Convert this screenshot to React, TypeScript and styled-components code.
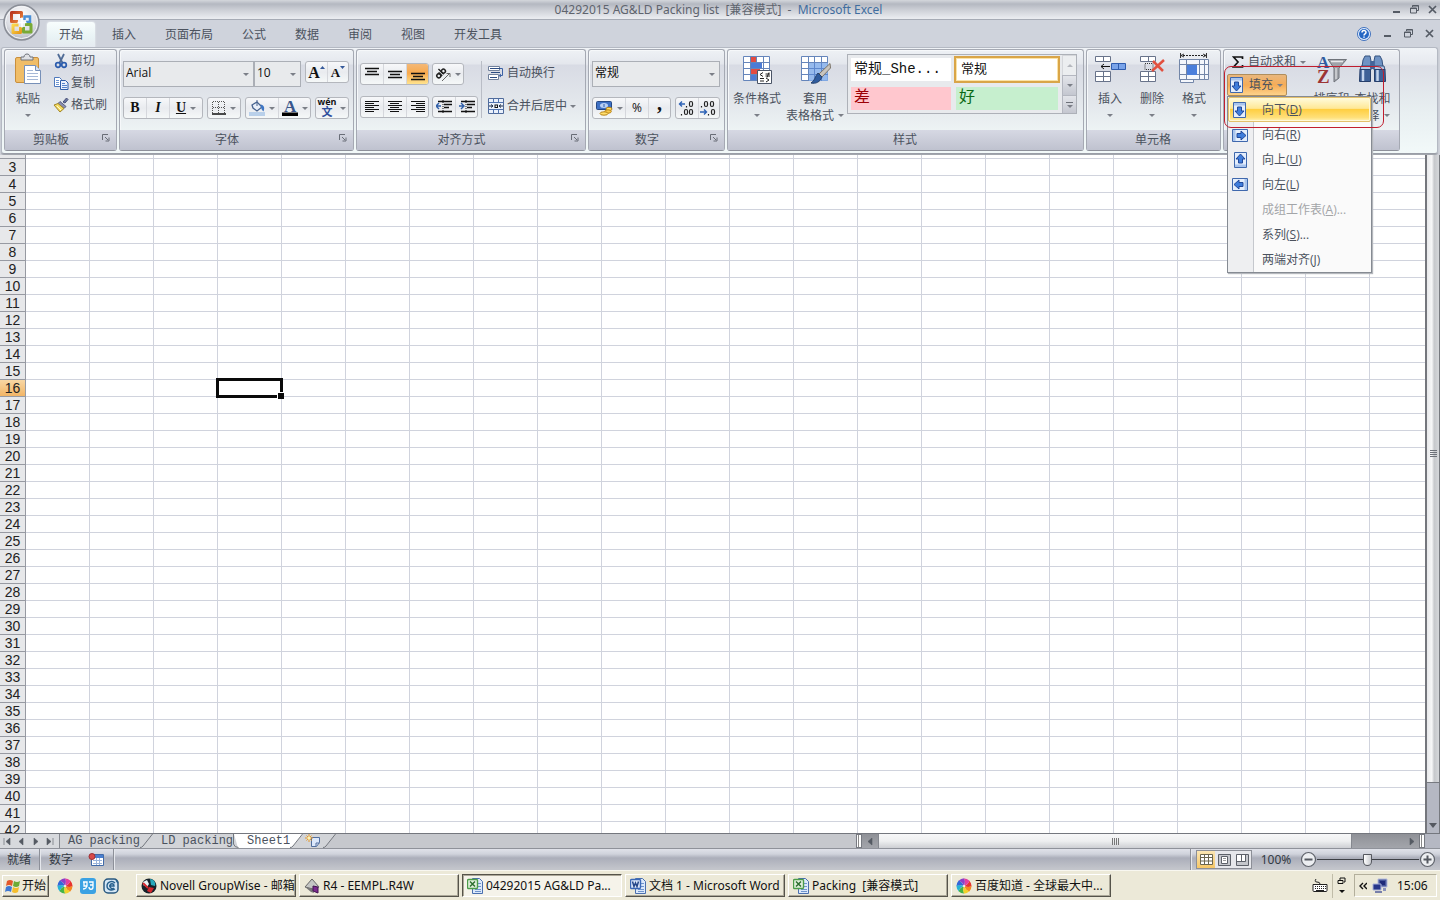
import React from 'react';
import styled, { createGlobalStyle, css } from 'styled-components';

const UI = '"Open Sans", "Noto Sans CJK SC", sans-serif';
const TASK = '"Noto Sans", "Noto Sans CJK SC", sans-serif';
const MONO = '"Liberation Mono", "Noto Sans CJK SC", monospace';
const INK = '#4b525e';

const GlobalStyle = createGlobalStyle`
  * { box-sizing: border-box; }
  body { margin: 0; background: #cfd2da; }
  button, select, input { font: inherit; color: inherit; margin: 0; }
  button { border: 0; padding: 0; background: none; }
  svg { display: block; flex: none; }
`;

const Page = styled.div`
  display: flex;
  flex-direction: column;
  height: 100vh;
  overflow: hidden;
  font: 12px/16px ${UI};
  color: ${INK};
  white-space: nowrap;
`;

/* ---------- title and tabs ---------- */
const TitleBar = styled.header`
  display: grid;
  grid-template-columns: 1fr auto 1fr;
  height: 20px;
  padding-right: 3px;
  align-items: center;
  border-bottom: 1px solid #a6abb5;
  background: linear-gradient(#d4d7dc 0, #b4b8c1 4px, #c9ccd3 9px, #e9ebef 18px);
`;
const Title = styled.h1`
  grid-column: 2;
  margin: 0;
  font: 12px/19px ${TASK};
  white-space: pre;
  color: #5e646e;
  b { font-weight: 400; color: #3f6d9f; }
`;
const WindowButtons = styled.div<{ $gap: number }>`
  display: flex;
  align-self: center;
  align-items: center;
  gap: ${p => p.$gap}px;
  margin-left: auto;
`;
const TabRow = styled.nav`
  display: flex;
  align-items: flex-end;
  gap: 5px;
  height: 27px;
  padding: 0 6px 0 47px;
  background: #cfd3dc;
`;
const Tab = styled.button<{ $on?: boolean }>`
  height: 25px;
  padding: 0 12px;
  line-height: 24px;
  border-radius: 3px 3px 0 0;
  ${p => p.$on && css`background: linear-gradient(#f8fdfd, #e9f3f5 60%, #e6ebf1); box-shadow: 0 0 2px #f7fbfc;`}
`;
const OfficeButton = styled.button`
  position: absolute;
  left: 3px;
  top: 4px;
`;

/* ---------- ribbon ---------- */
const Ribbon = styled.section`
  display: flex;
  gap: 2px;
  margin: 0 2px 1px 1px;
  padding: 1px 2px 2px;
  border: 1px solid #b4b9c3;
  border-bottom-color: #9a9ea7;
  border-radius: 3px;
  background: linear-gradient(#f0f3f7 0, #e6e9ef 16px, #dcdfe7 18px, #e8eff1 60%, #f2f9f9);
  box-shadow: 0 1px 1px #9da1a8;
`;
const GroupBox = styled.section<{ $w: number }>`
  display: flex;
  flex-direction: column;
  width: ${p => p.$w}px;
  height: 102px;
  border: 1px solid #a5a9b3;
  border-bottom-color: #8d909a;
  border-radius: 3px;
  background: linear-gradient(#eef1f5 0, #e4e7ed 14px, #d8dbe4 15px, #e2e6eb 50px, #edf3f4 80px);
  box-shadow: inset 1px 1px 0 #f6f8fa;
`;
const GroupBody = styled.div`
  display: flex;
  height: 80px;
`;
const GroupTitle = styled.h2`
  display: flex;
  align-items: center;
  height: 20px;
  margin: 0;
  padding-right: 1px;
  font: inherit;
  text-align: center;
  background: linear-gradient(#d6d8e3, #bfc2cf);
  span { flex: 1; }
  svg { margin: 0 5px 4px; }
`;
const Big = styled.button<{ $w: number }>`
  display: flex;
  flex-direction: column;
  align-items: center;
  width: ${p => p.$w}px;
  padding-top: 3px;
  svg { margin-bottom: 5px; }
`;
const BigLine = styled.span`
  display: flex;
  align-items: center;
  justify-content: center;
  gap: 4px;
  height: 17px;
  line-height: 17px;
`;
const Arrow = styled.i<{ $up?: boolean }>`
  width: 0;
  height: 0;
  border: 3px solid transparent;
  border-bottom-width: 0;
  border-top-color: #7b7f87;
  ${p => p.$up && css`transform: rotate(180deg); border-top-color: #b5b8be;`}
`;
const Stack = styled.div<{ $pad?: number; $gap?: number; $top?: number }>`
  display: flex;
  flex-direction: column;
  gap: ${p => p.$gap || 0}px;
  padding: ${p => p.$top || 0}px 0 0 ${p => p.$pad || 0}px;
`;
const Row = styled.div<{ $h: number; $gap: number; $top?: boolean }>`
  display: flex;
  align-items: ${p => (p.$top ? 'flex-start' : 'center')};
  gap: ${p => p.$gap}px;
  height: ${p => p.$h}px;
`;
const Command = styled.button<{ $gap: number }>`
  display: flex;
  align-items: center;
  gap: ${p => p.$gap}px;
  height: 22px;
  line-height: 18px;
`;
const Combo = styled.label<{ $w: number }>`
  position: relative;
  display: flex;
  width: ${p => p.$w}px;
  height: 26px;
  select {
    width: 100%;
    padding: 0 2px 2px;
    appearance: none;
    border: 1px solid #abafb6;
    border-radius: 0;
    background: #e8eaec;
    color: #111;
  }
  & + & select { border-left: 0; }
  ${Arrow} { position: absolute; right: 5px; top: 12px; pointer-events: none; }
`;
const Cluster = styled.div`
  display: flex;
  height: 22px;
  border: 1px solid #b4b7bd;
  border-radius: 3px;
  overflow: hidden;
  background: linear-gradient(#f7f8fa, #e9ebef 50%, #f5f8f8);
`;
const Tool = styled.button<{ $w: number; $on?: boolean }>`
  display: flex;
  align-items: center;
  justify-content: center;
  gap: 4px;
  width: ${p => p.$w}px;
  color: #111;
  & + & { border-left: 1px solid #d5d7dc; }
  ${p => p.$on && css`background: linear-gradient(#f3b877, #f8a94d 45%, #ffe38d);`}
`;
const GrowTool = styled(Tool)`
  gap: 0;
  padding-top: 2px;
`;
const Glyph = styled.span<{ $size?: number; $italic?: boolean; $line?: boolean; $raised?: boolean }>`
  font: ${p => (p.$italic ? 'italic ' : '')}bold ${p => p.$size || 14}px/18px "Liberation Serif", serif;
  text-decoration: ${p => (p.$line ? 'underline' : 'none')};
  padding-bottom: ${p => (p.$raised ? 10 : 0)}px;
`;
const Pinyin = styled.span`
  display: flex;
  flex-direction: column;
  align-items: center;
  font: bold 9px/8px ${UI};
  span + span { font-size: 11px; line-height: 12px; color: #2f4f9c; }
`;
const Divider = styled.div`
  width: 1px;
  height: 57px;
  margin: 11px 6px 0 3px;
  background: #b9bdc6;
`;

/* ---------- style gallery ---------- */
const Gallery = styled.div`
  display: flex;
  width: 230px;
  height: 60px;
  margin: 4px 0 0 3px;
  border: 1px solid #adb1b8;
  background: #e8eaed;
`;
const Swatches = styled.div`
  display: grid;
  flex: 1;
  grid-template: 27px 27px / 102px 106px;
  gap: 2px;
  padding: 1px 2px;
`;
const Swatch = styled.button<{ $bg: string; $ink: string; $size: number; $on?: boolean }>`
  padding: 0 3px 2px;
  text-align: left;
  background: ${p => p.$bg};
  color: ${p => p.$ink};
  font: ${p => p.$size}px/18px ${MONO};
  margin: 2px 1px;
  &:nth-child(even) { margin: 2px; }
  ${p => p.$on && css`
    &&& { margin: 0; }
    border: 2px solid #d9a548;
    box-shadow: inset 0 0 0 1px #fbe3a6;
    padding: 0 5px;
  `}
`;
const GalleryScroll = styled.div`
  display: grid;
  grid-template-rows: 20px 20px 18px;
  width: 14px;
  button {
    display: flex;
    flex-direction: column;
    align-items: center;
    justify-content: center;
    gap: 2px;
    border: 1px solid #b4b7c0;
    border-width: 1px 0 0 1px;
    background: linear-gradient(#e3e5ea, #c4c7d0);
  }
  button:first-child { background: #eceef0; border-color: #d5d7db; }
`;
const Bar = styled.i`
  width: 7px;
  height: 1px;
  background: #6d7179;
`;

/* ---------- editing group and fill menu ---------- */
const EditColumn = styled.div`
  width: 87px;
  padding-left: 3px;
`;
const SumCommand = styled(Command)`
  height: 24px;
  padding-left: 5px;
`;
const FillSlot = styled.div`
  position: relative;
  width: 60px;
  height: 22px;
`;
const FillButton = styled.button`
  display: flex;
  align-items: center;
  justify-content: space-between;
  width: 60px;
  height: 22px;
  padding: 0 3px 0 1px;
  border: 1px solid #b08e5c;
  border-radius: 2px;
  background: linear-gradient(#e9b77e, #f6ac57 50%, #fdd28a);
  line-height: 18px;
`;
const Menu = styled.div`
  position: absolute;
  z-index: 3;
  left: 0;
  top: 22px;
  width: 145px;
  border: 1px solid #868b93;
  background: linear-gradient(90deg, #eeeff1 25px, #c5c8cd 25px, #c5c8cd 26px, #fafafa 26px);
  box-shadow: 1px 1px 1px #b4b7bc;
`;
const MenuItem = styled.button<{ $on?: boolean }>`
  display: grid;
  grid-template-columns: 22px 1fr;
  column-gap: 8px;
  align-items: center;
  width: 100%;
  height: 25px;
  padding-left: 4px;
  text-align: left;
  &:disabled { color: #a3a5a8; }
  span { grid-column: 2; }
  svg { grid-row: 1; }
  ${p => p.$on && css`
    border: 1px solid #e3c06c;
    padding-left: 3px;
    border-radius: 2px;
    background: linear-gradient(#fffbdc, #ffe896 45%, #ffcf42 50%, #ffe07a 85%, #fff3b8);
    box-shadow: inset 0 0 0 1px #fff8d6;
  `}
`;
const Marker = styled.div`
  position: absolute;
  z-index: 4;
  left: -3px;
  top: -8px;
  width: 160px;
  height: 62px;
  border: 1px solid #c01e2e;
  border-radius: 7px;
  pointer-events: none;
`;

/* ---------- worksheet ---------- */
const Work = styled.main`
  display: flex;
  flex: 1;
  min-height: 0;
`;
const SheetView = styled.div`
  flex: 1;
  min-width: 0;
  overflow: hidden;
  background: #fff;
`;
const Sheet = styled.table`
  width: 100%;
  table-layout: fixed;
  border-collapse: separate;
  border-spacing: 0;
  td, th { padding: 0; height: 17px; }
  td { position: relative; border: solid #d0d3dd; border-width: 0 1px 1px 0; }
  td:last-child { border-right: 0; }
  tr:first-child > * { height: 4px; }
  col { width: 64px; }
  col:first-child { width: 26px; }
  col:last-child { width: auto; }
`;
const RowHead = styled.th<{ $on?: boolean }>`
  border: solid #979aa2;
  border-width: 0 1px 1px 0;
  background: ${p => (p.$on ? 'linear-gradient(#f8d7a4, #f2b566)' : '#e7e8ea')};
  font: 14px/16px "Liberation Sans", sans-serif;
  color: #222;
`;
const Selection = styled.div`
  position: absolute;
  z-index: 1;
  inset: -2px;
  border: 3px solid #0a0a0a;
  &::after {
    content: '';
    position: absolute;
    right: -4px;
    bottom: -4px;
    width: 6px;
    height: 6px;
    border: solid #fff;
    border-width: 1px 0 0 1px;
    background: #0a0a0a;
  }
`;
const VScroll = styled.div`
  display: flex;
  flex-direction: column;
  width: 15px;
  border-left: 2px solid #74767c;
  border-right: 1px solid #777a80;
  background: #b5b8c3;
`;
const VThumb = styled.div`
  display: flex;
  flex-direction: column;
  flex: 1;
  align-items: center;
  justify-content: center;
  gap: 1px;
  margin-bottom: 36px;
  padding-bottom: 30px;
  border-bottom: 1px solid #777a80;
  background: linear-gradient(90deg, #e8e9eb, #f7f7f8 40%, #c6c8cc 60%, #d6d8db);
`;
const VDown = styled.button`
  display: flex;
  justify-content: center;
  height: 14px;
  padding-top: 4px;
  ${Arrow} { border-width: 5px 4px 0; border-top-color: #555961; }
`;

/* ---------- sheet tabs ---------- */
const SheetBar = styled.div`
  display: flex;
  height: 16px;
  border-top: 1px solid #74777e;
  border-bottom: 1px solid #8f929a;
  background: #c6c8cd;
`;
const SheetNav = styled.div`
  display: flex;
  width: 60px;
  align-items: center;
  justify-content: space-around;
  padding-right: 2px;
  border-right: 1px solid #85888f;
  background: #d7d9dd;
`;
const SheetTab = styled.button<{ $on?: boolean }>`
  padding: 0 0 0 8px;
  font: 12px/14px ${MONO};
  background: ${p => (p.$on ? '#fff' : '#d2d4d8')};
  color: ${INK};
`;
const NewSheet = styled.button`
  padding: 0 2px;
  background: #d2d4d8;
`;
const Splitter = styled.i`
  width: 6px;
  border: 1px solid #777a81;
  background: linear-gradient(90deg, #fff 1px, #888 1px, #888 2px, #fff 2px);
`;
const HScroll = styled.div`
  display: flex;
  flex: 1;
  max-width: 569px;
  margin-left: auto;
`;
const HTrack = styled.div`
  display: grid;
  grid-template-columns: 16px 1fr 52px 15px;
  align-items: center;
  justify-items: center;
  flex: 1;
  background: linear-gradient(#8f9197, #a3a5ab);
`;
const HThumb = styled.div`
  display: flex;
  align-self: stretch;
  justify-self: stretch;
  align-items: center;
  justify-content: center;
  gap: 1px;
  border: 1px solid #85888f;
  border-width: 0 1px;
  background: linear-gradient(#f7f7f8, #eeeff0 50%, #cdcfd3);
  i { width: 1px; height: 7px; background: #777; }
`;
const Corner = styled.div`
  width: 15px;
  background: #b5b8c3;
`;

/* ---------- status ---------- */
const StatusBar = styled.footer`
  display: flex;
  height: 21px;
  background: linear-gradient(#e0e2e9 0, #d0d3dc 5px, #abaeba 9px, #c3c5cb 20px);
  line-height: 20px;
`;
const StatusCell = styled.div<{ $w: number }>`
  display: flex;
  align-items: center;
  gap: 15px;
  width: ${p => p.$w}px;
  padding-left: 7px;
  border-right: 1px solid #8d9099;
  box-shadow: 1px 0 0 #e5e7ec;
  & + & { padding-left: 9px; }
  color: #333a44;
`;
const StatusRight = styled.div`
  display: flex;
  align-items: center;
  margin-left: auto;
  padding: 0 4px 0 5px;
  border-left: 1px solid #8d9099;
  box-shadow: inset 1px 0 0 #e5e7ec;
`;
const Views = styled.div`
  display: flex;
  height: 19px;
  border: 1px solid #8c8f97;
`;
const ViewButton = styled.button<{ $on?: boolean }>`
  display: flex;
  align-items: center;
  justify-content: center;
  width: 18px;
  background: ${p => (p.$on ? 'linear-gradient(#fbe6b4, #f6c766)' : '#e6e7eb')};
`;
const ZoomText = styled.button`
  width: 48px;
  text-align: center;
  font-family: ${TASK};
  color: #333a44;
`;
const ZoomRange = styled.input`
  width: 102px;
  height: 17px;
  appearance: none;
  background: linear-gradient(#3d4046, #3d4046) center / 100% 1px no-repeat;
  &::-webkit-slider-thumb {
    appearance: none;
    width: 9px;
    height: 12px;
    border: 1px solid #55585f;
    border-radius: 1px 1px 5px 5px;
    background: linear-gradient(90deg, #fff, #c9cbd0);
  }
`;

/* ---------- taskbar ---------- */
const TaskBar = styled.nav`
  display: flex;
  align-items: center;
  height: 30px;
  padding: 0 3px 0 2px;
  border-top: 1px solid #f8f7f0;
  background: #ece9d8;
  font-family: ${TASK};
  color: #111;
`;
const raised = css`
  border: 1px solid;
  border-color: #fff #55534a #55534a #fff;
  box-shadow: inset -1px -1px 0 #aca899;
`;
const Start = styled.button`
  display: flex;
  align-items: center;
  gap: 1px;
  width: 47px;
  height: 22px;
  padding-left: 2px;
  ${raised}
`;
const Quick = styled.div`
  display: flex;
  gap: 7px;
  margin: 0 17px 0 8px;
`;
const Tasks = styled.div`
  display: flex;
  gap: 3px;
  flex: 1;
  min-width: 0;
`;
const Task = styled.button<{ $on?: boolean }>`
  display: flex;
  align-items: center;
  gap: 3px;
  width: 160px;
  height: 23px;
  padding-left: 4px;
  ${raised}
  span { overflow: hidden; text-overflow: ellipsis; white-space: pre; }
  ${p => p.$on && css`
    border-color: #55534a #fff #fff #55534a;
    box-shadow: inset 1px 1px 0 #aca899;
    background: #f5f3ea;
  `}
`;
const TrayTools = styled.div`
  display: flex;
  align-items: center;
  gap: 4px;
`;
const TrayLine = styled.i`
  width: 1px;
  height: 24px;
  background: #c0bca8;
`;
const Tray = styled.div`
  display: flex;
  align-items: center;
  width: 83px;
  height: 23px;
  margin-left: 7px;
  padding-left: 4px;
  border: 1px solid;
  border-color: #b3af9c #fff #fff #b3af9c;
  time { margin-left: 9px; }
  svg + svg { margin-left: 5px; }
`;

/* ---------- drawings ---------- */
const Svg = ({ w = 16, h = 16, children }: { w?: number; h?: number; children: React.ReactNode }) => (
  <svg width={w} height={h} viewBox={`0 0 ${w} ${h}`} fill="none" aria-hidden="true">{children}</svg>
);
const Letter = ({ x, y, size, fill, children }: { x: number; y: number; size: number; fill: string; children: string }) => (
  <text x={x} y={y} fontFamily="Liberation Serif, serif" fontWeight="bold" fontSize={size} fill={fill}>{children}</text>
);
const MinIcon = () => <Svg w={9} h={9}><path d="M1 7h7" stroke="#555b65" strokeWidth="2" /></Svg>;
const RestoreIcon = () => <Svg w={9} h={9}><path d="M2.500 2V.5h6v5H7M.5 3h6v5h-6zM.5 3.500h6M2.500 1h6" stroke="#555b65" /></Svg>;
const CloseIcon = () => <Svg w={9} h={9}><path d="M1 1l7 7M8 1L1 8" stroke="#555b65" strokeWidth="1.700" /></Svg>;
const HelpIcon = () => (
  <Svg w={14} h={14}>
    <circle cx="7" cy="7" r="6.500" fill="#e8f2ff" stroke="#3e70bd" /><circle cx="7" cy="7" r="5" fill="#2467c4" />
    <path d="M5 5.500C5 3 9 3 9 5.300 9 7 7 6.600 7 8.500M7 9.500v1.300" stroke="#fff" strokeWidth="1.500" />
  </Svg>
);
const OfficeIcon = () => (
  <Svg w={38} h={38}>
    <defs>
      <radialGradient id="orb" cx=".5" cy=".3" r=".75"><stop offset="0" stopColor="#fff" /><stop offset=".6" stopColor="#dcdee4" /><stop offset="1" stopColor="#a9adb6" /></radialGradient>
      <linearGradient id="red" x1="0" y1="0" x2="1" y2="1"><stop offset="0" stopColor="#b9361f" /><stop offset="1" stopColor="#ee8a3c" /></linearGradient>
      <linearGradient id="yel" x1="0" y1="0" x2="1" y2="1"><stop offset="0" stopColor="#fbd84e" /><stop offset="1" stopColor="#e79b1d" /></linearGradient>
    </defs>
    <circle cx="18.500" cy="18.500" r="17.500" fill="url(#orb)" stroke="#8a8e97" strokeWidth="1.500" />
    <circle cx="18.500" cy="18.500" r="16" stroke="#f5f6f8" />
    <path d="M15 17.500H8.500v-9h10V14" stroke="url(#red)" strokeWidth="3" strokeLinejoin="round" />
    <path d="M21.500 16v-3.500h5.500v5.500h-4" stroke="#4a8fd6" strokeWidth="2.500" />
    <path d="M15.500 21H10v7.500h7.500V23" stroke="url(#yel)" strokeWidth="3" strokeLinejoin="round" />
    <path d="M22 20.500h6V28h-7.500v-5" stroke="#79aa35" strokeWidth="3" strokeLinejoin="round" />
    <path d="M14.500 18.500h9M19 13.500v10" stroke="#fff" strokeWidth="1.500" />
  </Svg>
);
const Launcher = () => <Svg w={8} h={8}><path d="M.5 6V.5H6M3 3l3 3M7 3.500V7H3.500" stroke="#696d77" /></Svg>;
const PasteIcon = () => (
  <Svg w={32} h={32}>
    <rect x="3.500" y="4.500" width="23" height="25" rx="1.500" fill="#f0bd67" stroke="#c98f3d" />
    <path d="M9 7V4h3c0-4 6-4 6 0h3v3z" fill="#dfe1e5" stroke="#6f737b" />
    <path d="M12.500 12.500h11l5 5v13h-16z" fill="#fff" stroke="#7790b8" /><path d="M23.500 12.500v5h5" fill="#dce6f5" stroke="#7790b8" />
    <path d="M15 17.500h6M15 20.500h11M15 23.500h11M15 26.500h11" stroke="#a6b8d6" />
  </Svg>
);
const CutIcon = () => <Svg><path d="M5 1l4.500 9M11 1L6.500 10" stroke="#506c96" strokeWidth="1.800" /><circle cx="5" cy="12" r="2.300" stroke="#2b5cad" strokeWidth="1.700" /><circle cx="11" cy="12" r="2.300" stroke="#2b5cad" strokeWidth="1.700" /></Svg>;
const CopyIcon = () => <Svg><path d="M1.500 2.500h5l2 2v7h-7z" fill="#fff" stroke="#4f79bd" /><path d="M3 5.500h3M3 7.500h3M3 9.500h3" stroke="#6e95d0" /><path d="M7.500 5.500h5l2.500 2.500v6.500H7.500z" fill="#eaf1fc" stroke="#2f5ea8" /><path d="M9 8.500h3M9 10.500h5M9 12.500h5" stroke="#5584cb" /></Svg>;
const BrushIcon = () => <Svg><path d="M10 5l3.500-4L15 2.500 12 6z" fill="#6b76a3" stroke="#464f76" /><path d="M7 4.500l6 5-2 2-6-5z" fill="#8b8faf" stroke="#595e80" /><path d="M1 8l4-1.500 6 5L7 15z" fill="#f5dc64" stroke="#a28628" /><path d="M4 9l4 4" stroke="#fffbd0" /></Svg>;
const SizeIcon = ({ up }: { up?: boolean }) => <Svg w={5} h={16}><path d={up ? 'M0 4l2.500-3L5 4z' : 'M0 1h5L2.500 4z'} fill="#35599a" /></Svg>;
const BorderIcon = () => <Svg w={14} h={14}><path d="M.5 1v11M6.500 1v11M12.500 1v11M1 .5h12M1 6.500h12" stroke="#555" strokeDasharray="1 1" /><path d="M0 13h14" stroke="#111" strokeWidth="1.500" /></Svg>;
const BucketIcon = () => <Svg><path d="M3 5l5-3 5 5-5 4-4-3z" fill="#e9eff9" stroke="#47638f" strokeWidth="1.300" /><path d="M8 6V0" stroke="#47638f" /><path d="M11.500 4.500c3.500.5 4.500 3 3 7-1.500-1-2.500-3-3-7z" fill="#3e76c4" /><path d="M0 12h16v4H0z" fill="#b9d0ea" /></Svg>;
const FontColorIcon = () => <Svg><Letter x={2} y={12} size={17} fill="#38568c">A</Letter><path d="M0 12.500h16V16H0z" fill="#000" /></Svg>;
const VLines = ({ y }: { y: number }) => <Svg><path d={`M1 ${y + .5}h14M3 ${y + 3.5}h10M1 ${y + 6.5}h14`} stroke="#111" strokeWidth="1.500" /></Svg>;
const HLines = ({ side }: { side: 'l' | 'c' | 'r' }) => {
  const x = side === 'l' ? 1 : side === 'c' ? 3 : 6;
  return <Svg><path d={`M1 2.500h14M${x} 4.500h9M1 6.500h14M${x} 8.500h9M1 10.500h14M${x} 12.500h9`} stroke="#111" strokeWidth="1.200" /></Svg>;
};
const IndentIcon = ({ more }: { more?: boolean }) => <Svg><path d="M2 2.500h14M8 5.500h8M8 8.500h5M2 12.500h14" stroke="#111" strokeWidth="1.600" /><path d="M7 1v14" stroke="#111" strokeDasharray="1 1" /><path d={more ? 'M0 7h4M2 4l3 3-3 3' : 'M5 7H1M3 4L0 7l3 3'} stroke="#2f5ea8" strokeWidth="1.400" /></Svg>;
const OrientIcon = () => (
  <Svg><g transform="rotate(-45 7 8)"><circle cx="3.500" cy="7" r="2" stroke="#222" strokeWidth="1.500" /><path d="M5.800 4.500v5M8 2v7.500" stroke="#222" strokeWidth="1.400" /><circle cx="10" cy="7" r="2" stroke="#222" strokeWidth="1.500" /></g><path d="M7 15l7-7M11.500 7.500H15V11" stroke="#666" /></Svg>
);
const WrapIcon = () => <Svg><path d="M.5 1.500h11v4H.5zM.5 9.500h10v5H.5z" fill="#fff" stroke="#71819c" /><path d="M2 3.500h12M2 12.500h7M3 7.500h9" stroke="#2c4c83" /><path d="M12 3.500h2.500v7H12M13 9l-2 1.500 2 1.500" stroke="#3c62a5" /></Svg>;
const MergeIcon = () => <Svg><path d="M.5.5h15v15H.5z" fill="#e9f0fb" stroke="#506b9a" /><path d="M.5 4.500h15M.5 11.500h15M5.500.5v4M10.500.5v4M5.500 11.500v4M10.500 11.500v4" stroke="#4f72ae" /><path d="M1 8h4M3 6.500L5 8 3 9.500M15 8h-4M13 6.500L11 8l2 1.500" stroke="#1b2b45" /><rect x="7" y="7" width="2.500" height="2.500" stroke="#111" /></Svg>;
const MoneyIcon = () => <Svg w={17}><rect x=".5" y="1.500" width="15" height="8" rx="1" fill="#3e70c4" stroke="#244884" /><ellipse cx="8" cy="5.500" rx="4" ry="2.500" fill="#b9d0f4" /><path d="M8 4v3" stroke="#2f5ea8" /><ellipse cx="13" cy="9" rx="3" ry="1.700" fill="#ffdf6e" stroke="#b98517" /><ellipse cx="12" cy="11.500" rx="3.300" ry="1.700" fill="#f8c94b" stroke="#b98517" /><ellipse cx="8" cy="13.500" rx="4" ry="1.700" fill="#ffdf6e" stroke="#b98517" /></Svg>;
const DecimalIcon = ({ less }: { less?: boolean }) => (
  <Svg w={18}>
    <g stroke="#222" strokeWidth="1.200">
      {less
        ? <><rect x="4.500" y="1.500" width="3" height="5" rx="1.500" /><rect x="10.500" y="1.500" width="3" height="5" rx="1.500" /><rect x="11.500" y="9.500" width="3" height="5" rx="1.500" /><path d="M1.500 6v1.500M8.500 14v1.500" /></>
        : <><rect x="11.500" y="1.500" width="3" height="5" rx="1.500" /><rect x="6.500" y="9.500" width="3" height="5" rx="1.500" /><rect x="11.500" y="9.500" width="3" height="5" rx="1.500" /><path d="M8.500 6v1.500M3.500 14v1.500" /></>}
    </g>
    <path d={less ? 'M0 12h6M4 9.500L6.500 12 4 14.500' : 'M7 4H2M4 1.500L1.500 4 4 6.500'} stroke="#2d62b5" strokeWidth="1.400" />
  </Svg>
);
const GridBase = () => <path d="M2.500 3.500h26v24h-26zM2.500 9.500h26M2.500 15.500h26M2.500 21.500h26M9.500 3.500v24M15.500 3.500v24M22.500 3.500v24" fill="#fff" stroke="#6585bb" />;
const CondIcon = () => (
  <Svg w={32} h={32}><GridBase /><path d="M10 4h5v5h-5zM10 16h9v5h-9z" fill="#e34b41" /><path d="M10 10h11v5H10zM10 22h5v5h-5z" fill="#4c7bd6" /><path d="M16.500 17.500h14v13h-14z" fill="#fff" stroke="#4a5466" /><path d="M22 19.500l-3 2 3 2M19 25.500h4M19 28h4M24.500 21h4.500M24.500 23h4.500M28 19.500l-2 5M25 25l3 2-3 2" stroke="#222" /></Svg>
);
const TableIcon = () => (
  <Svg w={32} h={32}><GridBase /><path d="M10 10h19v18H10z" fill="#84aeea" fillOpacity=".85" /><path d="M10 15.500h19M10 21.500h19M15.500 10v18M22.500 10v18" stroke="#5e88cd" /><path d="M31 10.500L20 21l3 3 8.500-9z" fill="#c9c5be" stroke="#7b7468" /><path d="M19 20l4 4c-2 5-6 7-11 6 4-2 4-7 7-10z" fill="#2f5c9f" stroke="#24416e" /></Svg>
);
const InsertIcon = () => <Svg w={32} h={32}><path d="M1.500 3.500h15v5h-15zM1.500 18.500h15v10h-15zM9.500 3.500v5M9.500 18.500v10M1.500 23.500h15" fill="#fff" stroke="#68738a" /><path d="M17.500 10.500h14v6h-14z" fill="#79a3e9" stroke="#2f5cae" /><path d="M24.500 10.500v6" stroke="#2f5cae" /><path d="M7 13.500h9M10 11l-3 2.500 3 2.500" stroke="#111" /></Svg>;
const DeleteIcon = () => <Svg w={32} h={32}><path d="M4.500 3.500h15v5h-15zM4.500 18.500h15v10h-15zM12.500 3.500v5M12.500 18.500v10M4.500 23.500h15" fill="#fff" stroke="#68738a" /><path d="M9 10.500h8v6H9z" stroke="#333" strokeDasharray="1 1" /><path d="M17 8l10 10M28 7L16 18" stroke="#e2503f" strokeWidth="2.500" /></Svg>;
const FormatIcon = () => <Svg w={32} h={32}><path d="M1.500 6.500h29v20h-29zM1.500 11.500h29M1.500 21.500h29M8.500 6.500v20M21.500 6.500v20M26.500 6.500v20M2.500 26.500v3h13v-3" fill="#f4f7fc" stroke="#7386a8" /><path d="M9 12h10v10H9z" fill="#4b7fdb" /><path d="M2 2.500h26" stroke="#222" strokeDasharray="2 1" /><path d="M2.500 0v5M28.500 0v5M6 1L3 2.500 6 4M25 1l3 1.500L25 4" stroke="#333" /></Svg>;
const SumIcon = () => <Svg w={12} h={12}><path d="M10.500 3V1H1.500l4.500 5-4.500 5h9V9" stroke="#111" strokeWidth="1.700" /></Svg>;
const SortIcon = () => (
  <Svg w={32} h={32}>
    <path d="M12 6.500h18.500L23 15v10l-5 4V15z" fill="#a0a3a9" stroke="#6f737a" /><path d="M15 8.500h12" stroke="#e8e9eb" strokeWidth="1.500" /><path d="M20 15v11" stroke="#d3d5d9" strokeWidth="1.500" />
    <Letter x={1} y={15} size={17} fill="#315c9f">A</Letter>
    <Letter x={1} y={30} size={19} fill="#9c3434">Z</Letter>
  </Svg>
);
const FindIcon = () => (
  <Svg w={32} h={32}>
    <path d="M6 7l2-4h5l1 5v6H5zM17 14V8l1-5h5l2 4 1 7z" fill="#6f93c4" stroke="#35527f" /><path d="M13.500 8h4v8h-4z" fill="#44659a" />
    <path d="M4 13h9.500l.5 4H3zM17.500 13H27l1 4H17z" fill="#b4c9e5" stroke="#35527f" />
    <path d="M3 16.500h10.500v12H2.500zM17.500 16.500H28l.5 12h-11z" fill="#3e6197" stroke="#263f6b" /><path d="M6 17v11M20.500 17v11" stroke="#c3d4ec" strokeWidth="2.500" />
  </Svg>
);
const FillIcon = ({ turn = 0 }: { turn?: number }) => (
  <Svg><g transform={`rotate(${turn} 8 8)`}><path d="M1.500.5h12v15h-12z" fill="#e4eefc" stroke="#3f68ad" /><path d="M2 1h11v2.500H2z" fill="#a9c5ee" /><path d="M5.500 5h4v4h2.500L7.500 14 3 9h2.500z" fill="#3f7ddb" stroke="#21499a" /></g></Svg>
);
const NavIcon = ({ d }: { d: string }) => <Svg w={9} h={9}><path d={d} fill="#555a63" stroke="#555a63" strokeWidth=".6" /></Svg>;
const Slant = ({ left, right }: { left: string; right: string }) => <Svg w={13} h={14}><path d="M0 0h13L3 12.500 0 14z" fill={left} /><path d="M13 0v14H0l3-1.500z" fill={right} /><path d="M0 13.500q2 0 3-1.500L12.500 0" stroke="#74777e" /></Svg>;
const BackSlant = () => <Svg w={6} h={14}><path d="M0 0h3l3 14H0z" fill="#d2d4d8" /><path d="M1 0h5v14H5z" fill="#fff" /><path d="M.5 0v10q1 3.500 5 3.500" stroke="#74777e" /></Svg>;
const NewSheetIcon = () => <Svg h={14}><path d="M6.500 3.500h8v5l-3 4h-5z" fill="#dce8fb" stroke="#526f9f" /><path d="M11 12V9h3.500" stroke="#526f9f" /><path d="M4 0v8M0 4h8M1.500 1.500l5 5M6.500 1.500l-5 5" stroke="#e89a2a" /><circle cx="4" cy="4" r="1.500" fill="#fff4b0" /></Svg>;
const MacroIcon = () => <Svg><path d="M3.500 2.500h12v11h-12z" fill="#fff" stroke="#416aa8" /><path d="M4 3h11v3H4z" fill="#4a7fd0" /><path d="M5 8.500h9M5 11.500h9M8.500 6v7M11.500 6v7" stroke="#9bb4dc" /><circle cx="4" cy="4.500" r="3" fill="#d84a4a" stroke="#9d2f35" /></Svg>;
const NormalViewIcon = () => <Svg w={13} h={11}><path d="M.5.5h12v10H.5zM.5 3.500h12M.5 7h12M4.500.5v10M8.500.5v10" fill="#fff" stroke="#6b6650" /></Svg>;
const LayoutViewIcon = () => <Svg w={13} h={12}><path d="M.5.5h12v11H.5z" fill="#c5c7cc" stroke="#5d6169" /><path d="M3.500 2.500h6v7h-6z" fill="#fff" stroke="#5d6169" /><path d="M5 4.500h3M5 6.500h3" stroke="#999" /></Svg>;
const BreakViewIcon = () => <Svg w={13} h={12}><path d="M.5.5h12v11H.5z" fill="#c5c7cc" stroke="#5d6169" /><path d="M1 1h4v6H1zM6 1h3v6H6z" fill="#fff" /><path d="M5.500 1v6.500M9.500 1v6.500H1" stroke="#5d6169" /></Svg>;
const ZoomIcon = ({ plus }: { plus?: boolean }) => <Svg w={17} h={17}><circle cx="8.500" cy="8.500" r="7" fill="#eceef1" stroke="#5f636b" strokeWidth="1.200" /><path d={plus ? 'M4.500 8.500h8M8.500 4.500v8' : 'M4.500 8.500h8'} stroke="#555961" strokeWidth="2" /></Svg>;
const WinIcon = () => <Svg><path d="M2 3q3-2 6 0L7 8Q4 6 1 8z" fill="#e2582b" /><path d="M9 3q3 2 6 0l-1 5q-3 2-6 0z" fill="#6cab36" /><path d="M1 9q3-2 6 0l-1 5q-3-2-6 0z" fill="#3d78d4" /><path d="M8 9q3 2 6 0l-1 5q-3 2-6 0z" fill="#f4bd2c" /></Svg>;
const PinwheelIcon = () => (
  <Svg>
    {['#e8342f', '#f58a1f', '#f2d22c', '#45b549', '#27b3d6', '#3567d8', '#8a3fc9', '#e33fa0'].map((c, i) => (
      <path key={c} d="M8 8Q10 4 8 .5 11 .5 13.500 2.700 12.500 6 8 8z" fill={c} transform={`rotate(${i * 45 + 45} 8 8)`} />
    ))}
    <circle cx="8" cy="8" r="1" fill="#fff" />
  </Svg>
);
const BlueAppIcon = () => <Svg><rect width="16" height="16" rx="3" fill="#3ba2e3" /><path d="M3 4h4v4H4V4M7 6c0 4-1 5-4 5M9 4h4v3h-3M13 4v5c0 3-4 3-4 0" stroke="#fff" strokeWidth="1.300" /></Svg>;
const MailAppIcon = () => <Svg><rect x="1" y="1" width="14" height="14" rx="4" fill="#d5e7f5" stroke="#28587f" strokeWidth="1.500" /><path d="M12 5c-3-3-8-1-8 3s5 5 8 3M6 8h5c0-3-4-3-4 0s3 3 4 2M13 2l2 3" stroke="#28628f" strokeWidth="1.400" /></Svg>;
const NovellIcon = () => <Svg><circle cx="8" cy="8" r="7.500" fill="#16222a" /><path d="M2 4l4-2 2 4-2 3-4-2z" fill="#e9f4f7" /><path d="M9 1c4 0 6 4 5 7l-4-1z" fill="#27a9bd" /><path d="M8 9l5 1-3 5-4-2z" fill="#d5282e" /><path d="M2 5l5 5" stroke="#d5282e" strokeWidth="2" /></Svg>;
const R4Icon = () => <Svg><path d="M8 1l7 8-6 2-8-2z" fill="#c4c6c4" stroke="#666" /><path d="M1 9l8 2 1 4-3-1z" fill="#777" /><path d="M9 8l5 1v6l-5-2z" fill="#7b2b8e" stroke="#421450" /></Svg>;
const DocIcon = ({ word }: { word?: boolean }) => (
  <Svg>
    <path d="M5.500.5h7l3 3v12h-10z" fill="#dce9fb" stroke="#4a6fae" /><path d="M11 5.500h3M11 8.500h3M8 11.500h6M8 13.500h6" stroke="#6f94cc" />
    <rect x=".5" y="1.500" width="10" height="9" rx="1" fill={word ? '#dfe9fa' : '#e3f2df'} stroke={word ? '#3b69b8' : '#4b9c49'} strokeWidth="1.400" />
    <path d={word ? 'M2.500 3.500L4 8.500 5.500 5 7 8.500l1.500-5' : 'M3 3.500l5 5M8 3.500l-5 5'} stroke={word ? '#26488a' : '#2d6e2f'} strokeWidth="1.500" />
  </Svg>
);
const KeyboardIcon = () => <Svg w={16} h={15}><path d="M8 6Q8 4 5 4T4 1" stroke="#222" /><path d="M1 6.500h14v6q0 1-1 1H2q-1 0-1-1z" fill="#fff" stroke="#222" /><path d="M3 8.500h11M3 10.500h11" stroke="#222" strokeDasharray="1 1" /><path d="M4 12.500h8" stroke="#222" /></Svg>;
const LangIcon = () => <Svg w={10} h={18}><path d="M3 3V1h5v4H7M1 3.500h5v3H1z" stroke="#111" /><path d="M2 13h6l-3 3z" fill="#111" /></Svg>;
const ChevronIcon = () => <Svg w={8} h={8}><path d="M4 1L1 4l3 3M8 1L5 4l3 3" stroke="#111" strokeWidth="1.400" /></Svg>;
const NetworkIcon = () => <Svg><path d="M6 1h9v8H6z" fill="#48579c" stroke="#b4bbdc" /><path d="M8 3h5v4H8z" fill="#1e2a79" /><path d="M1 6h8v6H1z" fill="#27368a" stroke="#aab2d9" /><path d="M3 13h7v2H3z" fill="#777faa" /><path d="M11 10h3v3h-3z" fill="#8b93bd" /></Svg>;

/* ---------- assembled parts ---------- */
const Group = ({ title, w, launcher, children }: { title: string; w: number; launcher?: boolean; children: React.ReactNode }) => (
  <GroupBox $w={w}>
    <GroupBody>{children}</GroupBody>
    <GroupTitle><span>{title}</span>{launcher && <Launcher />}</GroupTitle>
  </GroupBox>
);
const BigButton = ({ w, icon, label, second }: { w: number; icon: React.ReactNode; label: string; second?: string }) => (
  <Big $w={w}>{icon}<BigLine>{label}</BigLine><BigLine>{second}<Arrow /></BigLine></Big>
);
const Picker = ({ w, name, value }: { w: number; name: string; value: string }) => (
  <Combo $w={w}><select aria-label={name} defaultValue={value}><option>{value}</option></select><Arrow /></Combo>
);
const tabs = ['开始', '插入', '页面布局', '公式', '数据', '审阅', '视图', '开发工具'];
const fillItems: { text: string; key: string; tail?: string; turn?: number; off?: boolean }[] = [
  { text: '向下', key: 'D', turn: 0 },
  { text: '向右', key: 'R', turn: -90 },
  { text: '向上', key: 'U', turn: 180 },
  { text: '向左', key: 'L', turn: 90 },
  { text: '成组工作表', key: 'A', tail: '...', off: true },
  { text: '系列', key: 'S', tail: '...' },
  { text: '两端对齐', key: 'J' },
];
const columns = Array.from({ length: 22 }, (_, i) => i);
const rows = Array.from({ length: 40 }, (_, i) => i + 3);
const tasks = [
  { text: 'Novell GroupWise - 邮箱', icon: <NovellIcon /> },
  { text: 'R4 - EEMPL.R4W', icon: <R4Icon /> },
  { text: '04292015 AG&LD Pa...', icon: <DocIcon />, on: true },
  { text: '文档 1 - Microsoft Word', icon: <DocIcon word /> },
  { text: 'Packing  [兼容模式]', icon: <DocIcon /> },
  { text: '百度知道 - 全球最大中...', icon: <PinwheelIcon /> },
];

export default function App() {
  return (
    <Page>
      <GlobalStyle />
      <TitleBar>
        <Title>{'04292015 AG&LD Packing list  [兼容模式]  -  '}<b>Microsoft Excel</b></Title>
        <WindowButtons $gap={9}>
          <button aria-label="最小化"><MinIcon /></button>
          <button aria-label="还原"><RestoreIcon /></button>
          <button aria-label="关闭"><CloseIcon /></button>
        </WindowButtons>
      </TitleBar>
      <OfficeButton aria-label="Office"><OfficeIcon /></OfficeButton>
      <TabRow>
        {tabs.map((t, i) => <Tab key={t} $on={i === 0}>{t}</Tab>)}
        <WindowButtons $gap={12}>
          <button aria-label="帮助"><HelpIcon /></button>
          <button aria-label="最小化工作簿"><MinIcon /></button>
          <button aria-label="还原工作簿"><RestoreIcon /></button>
          <button aria-label="关闭工作簿"><CloseIcon /></button>
        </WindowButtons>
      </TabRow>

      <Ribbon>
        <Group title="剪贴板" w={113} launcher>
          <BigButton w={46} icon={<PasteIcon />} label="粘贴" />
          <Stack $pad={2}>
            <Command $gap={2}><CutIcon />剪切</Command>
            <Command $gap={2}><CopyIcon />复制</Command>
            <Command $gap={2}><BrushIcon />格式刷</Command>
          </Stack>
        </Group>

        <Group title="字体" w={235} launcher>
          <Stack $pad={3} $top={11} $gap={10}>
            <Row $h={26} $gap={4} $top>
              <Row $h={26} $gap={0}>
                <Picker w={131} name="字体" value="Arial" />
                <Picker w={47} name="字号" value="10" />
              </Row>
              <Cluster>
                <GrowTool $w={21} aria-label="增大字号"><Glyph $size={16}>A</Glyph><SizeIcon up /></GrowTool>
                <GrowTool $w={21} aria-label="减小字号"><Glyph $size={13}>A</Glyph><SizeIcon /></GrowTool>
              </Cluster>
            </Row>
            <Row $h={22} $gap={4}>
              <Cluster>
                <Tool $w={22}><Glyph>B</Glyph></Tool>
                <Tool $w={23}><Glyph $italic>I</Glyph></Tool>
                <Tool $w={33}><Glyph $line>U</Glyph><Arrow /></Tool>
              </Cluster>
              <Cluster><Tool $w={32} aria-label="边框"><BorderIcon /><Arrow /></Tool></Cluster>
              <Cluster>
                <Tool $w={32} aria-label="填充颜色"><BucketIcon /><Arrow /></Tool>
                <Tool $w={32} aria-label="字体颜色"><FontColorIcon /><Arrow /></Tool>
              </Cluster>
              <Cluster><Tool $w={32} aria-label="拼音"><Pinyin><span>wén</span><span>文</span></Pinyin><Arrow /></Tool></Cluster>
            </Row>
          </Stack>
        </Group>

        <Group title="对齐方式" w={230} launcher>
          <Stack $pad={3} $top={11} $gap={9}>
            <Row $h={26} $gap={3}>
              <Cluster>
                <Tool $w={22} aria-label="顶端对齐"><VLines y={2} /></Tool>
                <Tool $w={23} aria-label="垂直居中"><VLines y={5} /></Tool>
                <Tool $w={22} $on aria-label="底端对齐"><VLines y={7} /></Tool>
              </Cluster>
              <Cluster><Tool $w={30} aria-label="方向"><OrientIcon /><Arrow /></Tool></Cluster>
            </Row>
            <Row $h={22} $gap={3}>
              <Cluster>
                <Tool $w={22} aria-label="左对齐"><HLines side="l" /></Tool>
                <Tool $w={23} aria-label="居中"><HLines side="c" /></Tool>
                <Tool $w={22} aria-label="右对齐"><HLines side="r" /></Tool>
              </Cluster>
              <Cluster>
                <Tool $w={22} aria-label="减少缩进"><IndentIcon /></Tool>
                <Tool $w={22} aria-label="增加缩进"><IndentIcon more /></Tool>
              </Cluster>
            </Row>
          </Stack>
          <Divider />
          <Stack $top={12} $gap={11}>
            <Command $gap={3}><WrapIcon />自动换行</Command>
            <Command $gap={3}><MergeIcon />合并后居中 <Arrow /></Command>
          </Stack>
        </Group>

        <Group title="数字" w={137} launcher>
          <Stack $pad={3} $top={11} $gap={10}>
            <Picker w={128} name="数字格式" value="常规" />
            <Row $h={22} $gap={4}>
              <Cluster>
                <Tool $w={32} aria-label="货币"><MoneyIcon /><Arrow /></Tool>
                <Tool $w={23}>%</Tool>
                <Tool $w={22}><Glyph $size={20} $raised>,</Glyph></Tool>
              </Cluster>
              <Cluster>
                <Tool $w={22} aria-label="增加小数位数"><DecimalIcon /></Tool>
                <Tool $w={21} aria-label="减少小数位数"><DecimalIcon less /></Tool>
              </Cluster>
            </Row>
          </Stack>
        </Group>

        <Group title="样式" w={357}>
          <BigButton w={58} icon={<CondIcon />} label="条件格式" />
          <BigButton w={58} icon={<TableIcon />} label="套用" second="表格格式" />
          <Gallery>
            <Swatches>
              <Swatch $bg="#fff" $ink="#111" $size={14}>常规_She...</Swatch>
              <Swatch $bg="#fff" $ink="#111" $size={13} $on>常规</Swatch>
              <Swatch $bg="#ffc7ce" $ink="#9c0006" $size={16}>差</Swatch>
              <Swatch $bg="#c6efce" $ink="#0a6a14" $size={16}>好</Swatch>
            </Swatches>
            <GalleryScroll>
              <button aria-label="上一行"><Arrow $up /></button>
              <button aria-label="下一行"><Arrow /></button>
              <button aria-label="其他"><Bar /><Arrow /></button>
            </GalleryScroll>
          </Gallery>
        </Group>

        <Group title="单元格" w={135}>
          <Row $h={80} $gap={0} $top>
            <Stack $pad={2} />
            <BigButton w={42} icon={<InsertIcon />} label="插入" />
            <BigButton w={42} icon={<DeleteIcon />} label="删除" />
            <BigButton w={42} icon={<FormatIcon />} label="格式" />
          </Row>
        </Group>

        <Group title="编辑" w={177}>
          <EditColumn>
            <SumCommand $gap={4}><SumIcon />自动求和 <Arrow /></SumCommand>
            <FillSlot>
              <FillButton aria-expanded="true"><FillIcon />填充<Arrow /></FillButton>
              <Menu role="menu">
                {fillItems.map((m, i) => (
                  <MenuItem key={m.key} role="menuitem" $on={i === 0} disabled={m.off}>
                    {m.turn !== undefined && <FillIcon turn={m.turn} />}
                    <span>{m.text}(<u>{m.key}</u>){m.tail}</span>
                  </MenuItem>
                ))}
              </Menu>
              <Marker />
            </FillSlot>
          </EditColumn>
          <BigButton w={41} icon={<SortIcon />} label="排序和" second="筛选" />
          <BigButton w={41} icon={<FindIcon />} label="查找和" second="选择" />
        </Group>
      </Ribbon>

      <Work>
        <SheetView>
          <Sheet>
            <colgroup><col />{columns.map(c => <col key={c} />)}</colgroup>
            <tbody>
              <tr><RowHead />{columns.map(c => <td key={c} />)}</tr>
              {rows.map(r => (
                <tr key={r}>
                  <RowHead scope="row" $on={r === 16}>{r}</RowHead>
                  {columns.map(c => <td key={c}>{r === 16 && c === 3 && <Selection />}</td>)}
                </tr>
              ))}
            </tbody>
          </Sheet>
        </SheetView>
        <VScroll>
          <VThumb><Bar /><Bar /><Bar /><Bar /></VThumb>
          <VDown aria-label="向下滚动"><Arrow /></VDown>
        </VScroll>
      </Work>

      <SheetBar>
        <SheetNav>
          <button aria-label="第一张"><NavIcon d="M1 1v7M7 1v7L3 4.500z" /></button>
          <button aria-label="上一张"><NavIcon d="M6 1v7L2 4.500z" /></button>
          <button aria-label="下一张"><NavIcon d="M3 1v7l4-3.500z" /></button>
          <button aria-label="最后一张"><NavIcon d="M8 1v7M2 1v7l4-3.500z" /></button>
        </SheetNav>
        <SheetTab>AG packing</SheetTab>
        <Slant left="#d2d4d8" right="#d2d4d8" />
        <SheetTab>LD packing</SheetTab>
        <BackSlant />
        <SheetTab $on>Sheet1</SheetTab>
        <Slant left="#fff" right="#d2d4d8" />
        <NewSheet aria-label="插入工作表"><NewSheetIcon /></NewSheet>
        <Slant left="#d2d4d8" right="#c6c8cd" />
        <HScroll>
          <Splitter />
          <HTrack>
            <NavIcon d="M6 1v7L2 4.500z" />
            <HThumb><i /><i /><i /><i /></HThumb>
            <span />
            <NavIcon d="M3 1v7l4-3.500z" />
          </HTrack>
          <Splitter />
        </HScroll>
        <Corner />
      </SheetBar>

      <StatusBar>
        <StatusCell $w={40}>就绪</StatusCell>
        <StatusCell $w={74}>数字<MacroIcon /></StatusCell>
        <StatusRight>
          <Views>
            <ViewButton $on aria-label="普通"><NormalViewIcon /></ViewButton>
            <ViewButton aria-label="页面布局视图"><LayoutViewIcon /></ViewButton>
            <ViewButton aria-label="分页预览"><BreakViewIcon /></ViewButton>
          </Views>
          <ZoomText>100%</ZoomText>
          <button aria-label="缩小"><ZoomIcon /></button>
          <ZoomRange type="range" aria-label="显示比例" defaultValue={49} />
          <button aria-label="放大"><ZoomIcon plus /></button>
        </StatusRight>
      </StatusBar>

      <TaskBar>
        <Start><WinIcon />开始</Start>
        <Quick>
          <button aria-label="浏览器"><PinwheelIcon /></button>
          <button aria-label="阅读"><BlueAppIcon /></button>
          <button aria-label="邮件"><MailAppIcon /></button>
        </Quick>
        <Tasks>
          {tasks.map(t => <Task key={t.text} $on={t.on}>{t.icon}<span>{t.text}</span></Task>)}
        </Tasks>
        <TrayTools><KeyboardIcon /><TrayLine /><LangIcon /></TrayTools>
        <Tray><ChevronIcon /><NetworkIcon /><time>15:06</time></Tray>
      </TaskBar>
    </Page>
  );
}
